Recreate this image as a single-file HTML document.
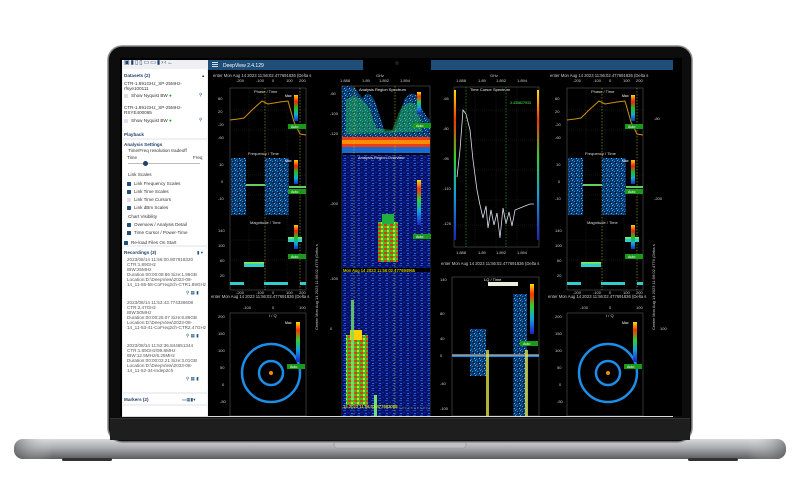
<!DOCTYPE html>
<html><head><meta charset="utf-8">
<style>
*{margin:0;padding:0;box-sizing:border-box}
body{width:800px;height:500px;background:#fff;position:relative;overflow:hidden;font-family:"Liberation Sans",sans-serif}
#sb{position:absolute;left:122px;top:60px;width:86px;height:356px;background:#eef0f3;font-size:4.6px;color:#333;line-height:5px}
.r{position:absolute;left:2px;white-space:nowrap}
.h{font-weight:bold;color:#1f3f6e}
.card{position:absolute;left:1px;right:1px;background:#fff;border-radius:2px}
.cb{display:inline-block;width:4px;height:4px;background:#1f4e79;margin-right:3px;vertical-align:-0.5px;border-radius:.5px}
.cbe{display:inline-block;width:4px;height:4px;background:#dde;margin-right:3px;vertical-align:-0.5px}
</style></head><body>
<svg width="800" height="500" style="position:absolute;left:0;top:0">
<defs>
<linearGradient id="base" x1="0" y1="0" x2="0" y2="1"><stop offset="0" stop-color="#d9dadc"/><stop offset=".45" stop-color="#a9abae"/><stop offset="1" stop-color="#5a5c60"/></linearGradient>
<linearGradient id="baseh" x1="0" y1="0" x2="1" y2="0"><stop offset="0" stop-color="#555" stop-opacity=".6"/><stop offset=".05" stop-color="#fff" stop-opacity="0"/><stop offset=".95" stop-color="#fff" stop-opacity="0"/><stop offset="1" stop-color="#555" stop-opacity=".6"/></linearGradient>
<linearGradient id="cbar" x1="0" y1="0" x2="0" y2="1"><stop offset="0" stop-color="#ffd000"/><stop offset=".25" stop-color="#f02010"/><stop offset=".5" stop-color="#20c020"/><stop offset=".75" stop-color="#10b0d0"/><stop offset="1" stop-color="#1030d0"/></linearGradient>
<linearGradient id="vbar" x1="0" y1="0" x2="0" y2="1"><stop offset="0" stop-color="#ffe000"/><stop offset=".2" stop-color="#ff3000"/><stop offset=".45" stop-color="#30d030"/><stop offset=".7" stop-color="#10a0e0"/><stop offset="1" stop-color="#2020c0"/></linearGradient>
<pattern id="noise" width="7" height="5" patternUnits="userSpaceOnUse"><rect width="7" height="5" fill="#061470"/><rect x="0" y="0" width="3" height="1" fill="#1a48c0"/><rect x="4" y="2" width="2" height="1" fill="#0c2aa0"/><rect x="1" y="3" width="2" height="1" fill="#2a60d0"/><rect x="5" y="4" width="1" height="1" fill="#020a40"/></pattern>
<pattern id="dots" width="5" height="5" patternUnits="userSpaceOnUse"><rect width="5" height="5" fill="#0b3a70"/><rect width="1" height="1" fill="#40b0f0"/><rect x="2" y="1" width="1" height="1" fill="#2a88d8"/><rect x="4" y="3" width="1" height="1" fill="#50c0ff"/><rect x="1" y="4" width="1" height="1" fill="#1a70c0"/><rect x="3" y="2" width="1" height="1" fill="#000"/></pattern>
<pattern id="hot" width="6" height="4" patternUnits="userSpaceOnUse"><rect width="6" height="4" fill="#30c030"/><rect x="0" width="3" height="2" fill="#f03010"/><rect x="3" y="2" width="2" height="2" fill="#ffd000"/></pattern>
</defs>
<rect x="14" y="439" width="772" height="20" rx="9" fill="url(#base)"/>
<rect x="14" y="439" width="772" height="20" rx="9" fill="url(#baseh)"/>
<rect x="334" y="439" width="132" height="9" rx="3" fill="#bfc1c4" stroke="#888" stroke-width=".5"/>
<rect x="62" y="458" width="50" height="3" rx="1.5" fill="#333"/>
<rect x="688" y="458" width="50" height="3" rx="1.5" fill="#333"/>
<rect x="108" y="46" width="584" height="396" rx="14" fill="#0d0d0d" stroke="#8a8a8d" stroke-width="1.5"/>
<rect x="110" y="418" width="580" height="22" fill="#1e1e1f"/>
<rect x="110" y="418" width="580" height="1" fill="#333"/>
<rect x="120" y="58" width="562" height="358" fill="#000"/>
<rect x="208" y="60" width="465" height="10" fill="#1f4e79"/>
<rect x="212" y="62" width="6" height="1" fill="#cde"/><rect x="212" y="64" width="6" height="1" fill="#cde"/><rect x="212" y="66" width="6" height="1" fill="#cde"/>
<text x="223" y="67" font-size="5" fill="#fff" font-family="Liberation Sans">DeepView 2.4.129</text>
<path d="M363 58 H431 V68 Q431 72 427 72 H367 Q363 72 363 68Z" fill="#000"/>
<circle cx="397" cy="63" r="2" fill="#1c1c22"/>
<rect x="208" y="70" width="465" height="346" fill="#000"/>

<g id="pA" font-family="Liberation Sans" font-size="4" fill="#ccc">
 <text x="213" y="77" font-size="4.2">enter Mon Aug 14 2023 11:56:02.477691836 (Delta s</text>
 <text x="236" y="82">-200</text><text x="256" y="82">-100</text><text x="272" y="82">0</text><text x="286" y="82">100</text><text x="299" y="82">200</text>
 <rect x="230" y="88" width="76" height="202" fill="none" stroke="#555" stroke-width=".6"/>
 <g stroke="#333" stroke-width=".4" stroke-dasharray="1 1"><path d="M249 88V290M268 88V290M287 88V290M230 110H306M230 130H306M230 175H306M230 195H306M230 240H306M230 260H306"/></g>
 <g stroke="#cc2" stroke-width=".5" stroke-dasharray="1.5 1.5"><path d="M265 88V290M300 88V290"/></g>
 <text x="254" y="93" fill="#ddd">Phase / Time</text>
 <text x="218" y="100">60</text><text x="218" y="113">20</text><text x="218" y="126">-20</text><text x="218" y="139">-60</text>
 <path d="M230 120 L238 119 L244 118 L252 110 L262 101 L268 104 L280 102 L288 101 L294 122 L300 134 L306 135" fill="none" stroke="#d09010" stroke-width="1"/>
 <rect x="294" y="95" width="4" height="26" fill="url(#cbar)"/>
 <text x="285" y="97" font-size="3.5" fill="#fff">Max</text>
 <rect x="288" y="124" width="18" height="5" fill="#1a9a1a"/><text x="291" y="128" fill="#fff" font-size="3.6">Auto</text>
 <text x="248" y="155" fill="#ddd">Frequency / Time</text>
 <text x="219" y="166">10</text><text x="221" y="183">0</text><text x="218" y="200">-10</text>
 <rect x="231" y="158" width="15" height="57" fill="url(#dots)"/>
 <rect x="265" y="158" width="24" height="57" fill="url(#dots)"/>
 <rect x="246" y="184" width="19" height="2" fill="#6c6"/><rect x="289" y="186" width="17" height="2" fill="#6c6"/>
 <rect x="294" y="160" width="4" height="24" fill="url(#cbar)"/>
 <text x="285" y="162" font-size="3.5" fill="#fff">Max</text>
 <rect x="288" y="189" width="18" height="5" fill="#1a9a1a"/><text x="291" y="193" fill="#fff" font-size="3.6">Auto</text>
 <text x="250" y="224" fill="#ddd">Magnitude / Time</text>
 <text x="218" y="232">140</text><text x="218" y="247">100</text><text x="220" y="262">60</text><text x="220" y="277">20</text>
 <rect x="244" y="263" width="20" height="4" fill="#3cc" /><rect x="244" y="262" width="20" height="1.5" fill="#8e4"/>
 <rect x="230" y="282" width="14" height="3" fill="#3cc"/><rect x="264" y="282" width="24" height="3" fill="#3cc"/><rect x="300" y="282" width="6" height="3" fill="#3cc"/>
 <rect x="288" y="238" width="14" height="4" fill="#3cc"/><rect x="288" y="237" width="14" height="1.5" fill="#8e4"/>
 <rect x="294" y="225" width="4" height="24" fill="url(#cbar)"/>
 <rect x="288" y="254" width="18" height="5" fill="#1a9a1a"/><text x="291" y="258" fill="#fff" font-size="3.6">Auto</text>
 <text x="236" y="294">-200</text><text x="256" y="294">-100</text><text x="272" y="294">0</text><text x="286" y="294">100</text><text x="299" y="294">200</text>
 <text x="211" y="298" font-size="4.2">enter Mon Aug 14 2023 11:56:02.477691836 (Delta s</text>
 <text x="243" y="309">-100</text><text x="272" y="309">0</text><text x="299" y="309">100</text>
 <rect x="230" y="313" width="76" height="103" fill="none" stroke="#555" stroke-width=".6"/>
 <text x="269" y="317" fill="#ddd">I / Q</text>
 <text x="218" y="318">200</text><text x="218" y="335">150</text><text x="218" y="352">100</text><text x="220" y="369">50</text><text x="222" y="386">0</text><text x="220" y="403">-50</text>
 <circle cx="271" cy="373" r="29" fill="none" stroke="#1c8ee8" stroke-width="2.5"/>
 <circle cx="271" cy="373" r="12" fill="none" stroke="#1c8ee8" stroke-width="2.5"/>
 <circle cx="271" cy="373" r="2" fill="#f80"/>
 <rect x="296" y="322" width="4" height="40" fill="url(#vbar)"/>
 <text x="285" y="324" font-size="3.5" fill="#fff">Max</text>
 <rect x="287" y="364" width="18" height="5" fill="#1a9a1a"/><text x="290" y="368" fill="#fff" font-size="3.6">Auto</text>
 <text x="318" y="330" font-size="4" transform="rotate(-90 318 330)">Center Mon Aug 14 2023 11:56:02.4776 (Delta s</text>
</g>
<use href="#pA" x="337" y="0"/>
<text x="654" y="120" font-size="4" fill="#ccc" font-family="Liberation Sans">-80</text>
<text x="654" y="200" font-size="4" fill="#ccc" font-family="Liberation Sans">-200</text>
<text x="660" y="330" font-size="4" fill="#ccc" font-family="Liberation Sans">100</text>

<g font-family="Liberation Sans" font-size="4" fill="#ccc">
 <text x="376" y="77">GHz</text>
 <text x="340" y="82">1.888</text><text x="362" y="82">1.89</text><text x="379" y="82">1.892</text><text x="400" y="82">1.894</text>
 <rect x="342" y="86" width="88" height="330" fill="none" stroke="#555" stroke-width=".6"/>
 <path d="M342 86 L342 145 L430 145 L430 120 Q420 110 418 96 Q410 90 404 100 L395 130 L385 132 L376 104 Q370 88 362 98 L355 88 L350 86Z" fill="url(#dots)"/>
 <path d="M346 100 Q358 90 370 110 L376 128 L392 130 L400 110 Q410 96 418 108 L422 132 L346 134Z" fill="#22c050" opacity=".45"/>
 <rect x="342" y="137" width="88" height="10" fill="#f03a10"/>
 <rect x="342" y="140" width="88" height="4" fill="#ffb000" opacity=".7"/>
 <rect x="342" y="147" width="88" height="6" fill="#1a6ad0"/>
 <text x="359" y="91" fill="#eee">Analysis Region Spectrum</text>
 <rect x="342" y="155" width="88" height="261" fill="url(#noise)"/>
 <text x="358" y="159" fill="#eee">Analysis Region Overview</text>
 <rect x="378" y="222" width="20" height="40" fill="url(#hot)"/>
 <rect x="382" y="214" width="12" height="10" fill="#20b040"/>
 <rect x="346" y="335" width="22" height="70" fill="url(#hot)"/>
 <rect x="350" y="330" width="12" height="10" fill="#ffd000"/>
 <rect x="351" y="300" width="3" height="100" fill="#70e070" opacity=".8"/>
 <rect x="374" y="395" width="3" height="21" fill="#70e070"/>
 <rect x="342" y="268" width="88" height="4" fill="#000"/>
 <text x="343" y="272" fill="#ff0" font-size="4.2">Mon Aug 14 2023 11:56:02.477694965</text>
 <text x="343" y="408" fill="#ff0" font-size="4.2">14 2023 11:56:02.477683088</text>
 <g stroke="#cc2" stroke-width=".5" stroke-dasharray="1.5 1.5"><path d="M354 86V416M395 86V416M342 408H430"/></g>
 <rect x="417" y="92" width="4" height="22" fill="url(#vbar)"/>
 <rect x="413" y="123" width="18" height="5" fill="#1a9a1a"/><text x="416" y="127" fill="#fff" font-size="3.6">Auto</text>
 <rect x="417" y="180" width="4" height="45" fill="url(#vbar)"/>
 <rect x="413" y="234" width="18" height="5" fill="#1a9a1a"/><text x="416" y="238" fill="#fff" font-size="3.6">Auto</text>
 <text x="330" y="95">-60</text><text x="330" y="115">-100</text><text x="330" y="135">-120</text><text x="330" y="205">-200</text><text x="330" y="280">-100</text><text x="330" y="330">0</text>
</g>

<g font-family="Liberation Sans" font-size="4" fill="#ccc">
 <text x="490" y="77">GHz</text>
 <text x="456" y="82">1.888</text><text x="478" y="82">1.89</text><text x="496" y="82">1.892</text><text x="517" y="82">1.894</text>
 <rect x="454" y="87" width="85" height="160" fill="none" stroke="#555" stroke-width=".6"/>
 <g stroke="#333" stroke-width=".4" stroke-dasharray="1 1"><path d="M475 87V247M496 87V247M517 87V247M454 110H539M454 140H539M454 170H539M454 200H539M454 225H539"/></g>
 <rect x="454" y="90" width="2" height="150" fill="url(#vbar)"/><rect x="537" y="90" width="2" height="150" fill="url(#vbar)"/>
 <text x="470" y="91" fill="#eee">Time Cursor Spectrum</text>
 <path d="M457 177 L460 150 L463 110 L466 114 L470 130 L473 160 L477 190 L480 205 L483 218 L486 206 L488 228 L491 210 L494 225 L497 213 L500 238 L503 208 L506 224 L509 212 L512 226 L515 210 L520 208 L525 206 L530 204 L534 204" fill="none" stroke="#dde" stroke-width=".8"/>
 <g stroke="#3c3" stroke-width=".5" stroke-dasharray="1.5 1.5"><path d="M466 87V247M506 87V247"/></g>
 <text x="510" y="104" fill="#4f4" font-size="3.6">3.435827933</text>
 <text x="443" y="100">-65</text><text x="443" y="130">-80</text><text x="443" y="160">-95</text><text x="443" y="190">-110</text><text x="443" y="225">-125</text>
 <text x="456" y="254">1.888</text><text x="478" y="254">1.89</text><text x="496" y="254">1.892</text><text x="517" y="254">1.894</text>
 <text x="441" y="265" font-size="4.2">enter Mon Aug 14 2023 11:56:02.477691836 (Delta s</text>
 <rect x="452" y="277" width="87" height="139" fill="none" stroke="#555" stroke-width=".6"/>
 <text x="484" y="281" fill="#eee">LQ / Time</text>
 <rect x="470" y="329" width="16" height="47" fill="url(#dots)"/>
 <rect x="513" y="294" width="14" height="122" fill="url(#dots)"/>
 <rect x="452" y="354" width="87" height="3" fill="#1c8ee8"/><rect x="452" y="355" width="87" height="1" fill="#c84"/>
 <rect x="488" y="282" width="30" height="4" fill="#eed"/>
 <rect x="530" y="284" width="4" height="50" fill="url(#vbar)"/>
 <rect x="520" y="341" width="18" height="5" fill="#1a9a1a"/><text x="523" y="345" fill="#fff" font-size="3.6">Auto</text>
 <rect x="486" y="350" width="3" height="66" fill="#dd4" opacity=".8"/><rect x="525" y="350" width="3" height="66" fill="#dd4" opacity=".8"/>
 <text x="440" y="281">140</text><text x="440" y="315">80</text><text x="440" y="340">40</text><text x="440" y="357">0</text><text x="440" y="385">-40</text><text x="440" y="410">-100</text>
</g>
<rect x="122" y="416" width="551" height="1" fill="#ddd"/>
</svg>

<div id="sb">
 <div class="r" style="top:1px;font-size:6px;color:#1f3f6e;letter-spacing:1px">▣▮▯▯▭▭▮›‹←</div>
 <div class="card" style="top:9px;height:64px"></div>
 <div class="r h" style="top:13px">Datasets (2)</div><div class="r" style="top:13px;left:80px">▴</div>
 <div class="r" style="top:21px">CTR-1.891GHz_SP-25MHz-<br>rfsye100111</div>
 <div class="r" style="top:33px"><span class="cbe"></span>Show Nyquist BW <span style="color:#1a1">●</span></div><div class="r" style="top:32px;left:77px;color:#1f4e79">⚲</div>
 <div class="r" style="top:45px">CTR-1.891GHz_SP-25MHz-<br>RSYE400065</div>
 <div class="r" style="top:58px"><span class="cbe"></span>Show Nyquist BW <span style="color:#1a1">●</span></div><div class="r" style="top:57px;left:77px;color:#1f4e79">⚲</div>
 <div class="card" style="top:70px;height:8px"></div>
 <div class="r h" style="top:72px">Playback</div>
 <div class="card" style="top:80px;height:105px"></div>
 <div class="r h" style="top:82px">Analysis Settings</div>
 <div class="r" style="top:88px;left:6px">Time/Freq resolution tradeoff</div>
 <div class="r" style="top:95px;left:5px">Time</div><div class="r" style="top:95px;left:71px">Freq</div>
 <div style="position:absolute;left:6px;top:103px;width:72px;height:1px;background:#bbb"></div>
 <div style="position:absolute;left:21px;top:101px;width:5px;height:5px;border-radius:50%;background:#1f3f6e"></div>
 <div class="r" style="top:112px;left:6px">Link Scales</div>
 <div class="r" style="top:121px;left:5px"><span class="cb"></span>Link Frequency Scales</div>
 <div class="r" style="top:129px;left:5px"><span class="cb"></span>Link Time Scales</div>
 <div class="r" style="top:137px;left:5px"><span class="cbe"></span>Link Time Cursors</div>
 <div class="r" style="top:145px;left:5px"><span class="cb"></span>Link dBm Scales</div>
 <div class="r" style="top:154px;left:6px">Chart Visibility</div>
 <div class="r" style="top:162px;left:5px"><span class="cb"></span>Overview / Analysis Detail</div>
 <div class="r" style="top:170px;left:5px"><span class="cb"></span>Time Cursor / Power-Time</div>
 <div class="r" style="top:180px"><span class="cb"></span>Re-load Files On Start</div>
 <div class="card" style="top:187px;height:145px"></div>
 <div class="r h" style="top:190px">Recordings (3)</div><div class="r" style="top:190px;left:75px;color:#1f4e79">▮ ▾</div>
 <div class="r" style="top:197px;left:5px;color:#555">2023/08/14 11:56:00.807918320<br>CTR:1.89GHz<br>IBW:25MHz<br>Duration:00:00:08.86 Size:1.96GB<br>Location:D:\DeepView\2023-08-<br>14_11-55-58-CoFreq2ch-CTR1.89GHz</div>
 <div class="r" style="top:230px;left:64px;color:#1f4e79">⚲ ▦ ▮</div>
 <div class="r" style="top:240px;left:5px;color:#555">2023/08/14 11:53:43.774336608<br>CTR:2.47GHz<br>IBW:50MHz<br>Duration:00:00:26.07 Size:8.86GB<br>Location:D:\DeepView\2023-08-<br>14_11-53-41-CoFreq2ch-CTR2.47GHz</div>
 <div class="r" style="top:273px;left:64px;color:#1f4e79">⚲ ▦ ▮</div>
 <div class="r" style="top:283px;left:5px;color:#555">2023/08/14 11:52:36.844651344<br>CTR:1.89GHz/99.8MHz<br>IBW:12.5MHz/6.25MHz<br>Duration:00:00:02.21 Size:3.01GB<br>Location:D:\DeepView\2023-08-<br>14_11-52-34-Indep2ch</div>
 <div class="r" style="top:316px;left:64px;color:#1f4e79">⚲ ▦ ▮</div>
 <div class="card" style="top:334px;height:10px"></div>
 <div class="r h" style="top:337px">Markers (2)</div><div class="r" style="top:337px;left:60px;color:#1f4e79">▭▦▮▾</div>
 <div class="card" style="top:346px;height:10px;background:#fff"></div>
</div>
</body></html>
